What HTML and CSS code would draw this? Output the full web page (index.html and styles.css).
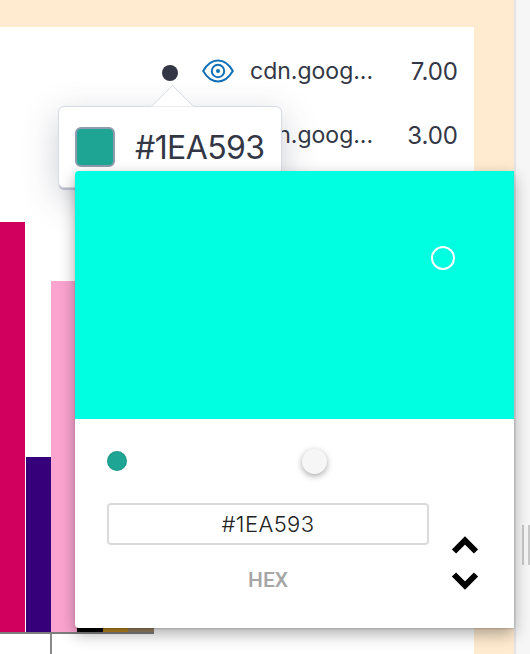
FILE: index.html
```html
<!DOCTYPE html>
<html lang="en">
<head>
<meta charset="utf-8">
<title>Color picker</title>
<link rel="stylesheet" href="styles.css">
</head>
<body>
<main class="page">
  <section class="card">
    <ul class="legend">
      <li class="legend-row">
        <span class="legend-dot"></span>
        <svg class="eye" viewBox="0 0 32 24" fill="none" stroke="#0f6fb8" stroke-width="2"><path d="M1.2 12C5 5.4 10 1.6 16 1.6S27 5.4 30.8 12C27 18.6 22 22.4 16 22.4S5 18.6 1.2 12Z"/><circle cx="16" cy="12" r="6.2"/><circle cx="16" cy="12" r="2" fill="#0f6fb8" stroke="none"/></svg>
        <span class="legend-name">cdn.goog...</span>
        <span class="legend-value">7.00</span>
      </li>
      <li class="legend-row">
        <span class="legend-dot legend-dot-hidden"></span>
        <span class="eye"></span>
        <span class="legend-name">cdn.goog...</span>
        <span class="legend-value">3.00</span>
      </li>
    </ul>
    <div class="chart">
      <div class="bars">
        <span class="bar bar-crimson"></span>
        <span class="bar bar-purple"></span>
        <span class="bar bar-pink"></span>
        <span class="bar bar-black"></span>
        <span class="bar bar-brown"></span>
        <span class="bar bar-taupe"></span>
      </div>
      <div class="axis"><span class="tick"></span></div>
    </div>
    <div class="tooltip">
      <span class="arrow"></span>
      <span class="swatch"></span>
      <span class="tooltip-text">#1EA593</span>
    </div>
  </section>
  <div class="picker">
    <div class="saturation"><span class="handle"></span></div>
    <div class="controls">
      <div class="slider-row">
        <span class="preview"></span>
        <span class="thumb"></span>
      </div>
      <div class="field-row">
        <div class="field">
          <div class="input">#1EA593</div>
          <div class="label">HEX</div>
        </div>
        <div class="toggles">
          <svg class="chev" viewBox="0 0 28 18" fill="none" stroke="#000" stroke-width="6"><path d="M3 15.500 14 4.500 25 15.500"/></svg>
          <svg class="chev" viewBox="0 0 28 18" fill="none" stroke="#000" stroke-width="6"><path d="M3 2.500 14 13.500 25 2.500"/></svg>
        </div>
      </div>
    </div>
  </div>
</main>
<aside class="side"><span class="grip"></span><span class="grip"></span></aside>
</body>
</html>
```
FILE: styles.css
```css
* { box-sizing: border-box; }
html, body { margin: 0; height: 100%; overflow: hidden; }
body {
  display: flex;
  width: 530px;
  height: 654px;
  font-family: Inter, "Liberation Sans", sans-serif;
  color: #333745;
}
.page {
  position: relative;
  width: 514px;
  padding: 27px 40px 0 0;
  background: #ffebcf;
}
.side {
  flex: 1;
  display: flex;
  gap: 4px;
  padding: 525px 0 0 6px;
  background: #f6f6f6;
  border-left: 2px solid #e4e4e4;
  align-items: flex-start;
}
.grip { width: 2px; height: 40px; background: #c8c8c8; }
.card {
  position: relative;
  height: 627px;
  background: #fff;
}
.legend {
  margin: 0;
  padding: 26px 16px 0 0;
  list-style: none;
}
.legend-row {
  display: flex;
  align-items: center;
  justify-content: flex-end;
  height: 36px;
  margin-bottom: 28px;
  font-size: 24px;
}
.legend-dot {
  width: 16px;
  height: 16px;
  margin-right: 24px;
  margin-top: 4px;
  border-radius: 50%;
  background: #333745;
}
.legend-dot-hidden { visibility: hidden; }
.eye { width: 32px; height: 24px; margin-right: 16px; }
.legend-name { width: 131px; font-size: 23px; }
.legend-value { width: 77px; text-align: right; }
.chart { position: absolute; left: 0; bottom: 0; width: 154px; padding-bottom: 20px; }
.bars { display: flex; align-items: flex-end; height: 410px; }
.bar { flex: 0 0 25.67px; }
.bar-crimson { height: 410px; background: #d1005f; border-right: 1px solid #fff; }
.bar-purple { height: 175px; background: #37007b; }
.bar-pink { height: 351px; background: #fba4d0; }
.bar-black { height: 8px; background: #000; }
.bar-brown { height: 8px; background: #c08a22; }
.bar-taupe { height: 8px; background: #9c8262; }
.axis { position: relative; height: 2px; background: #7d7d7d; }
.tick { position: absolute; left: 50px; top: 2px; width: 2px; height: 20px; background: #8a8a8a; }
.tooltip {
  position: absolute;
  left: 58px;
  top: 79px;
  display: flex;
  align-items: flex-start;
  gap: 20px;
  width: 224px;
  height: 82px;
  padding: 20px 16px;
  background: #fff;
  border: 1px solid #d7dbe5;
  border-radius: 6px;
  box-shadow: 0 3px 1px -1px #b9bdca, 0 10px 34px rgba(60, 64, 90, 0.25);
}
.arrow {
  position: absolute;
  left: 97.5px;
  top: -16.5px;
  width: 31px;
  height: 31px;
  background: #fff;
  border: solid #d7dbe5;
  border-width: 1px 0 0 1px;
  transform: rotate(45deg);
  clip-path: polygon(0 0, 100% 0, 0 100%);
}
.swatch {
  flex: none;
  width: 40px;
  height: 40px;
  background: #1ea593;
  border: 2px solid #8f9bae;
  border-radius: 6px;
}
.tooltip-text { font-size: 32px; line-height: 41px; letter-spacing: -0.6px; white-space: nowrap; }
.picker {
  position: absolute;
  left: 75px;
  top: 171px;
  width: 439px;
  height: 457px;
  background: #fff;
  border-radius: 4px 0 0 4px;
  box-shadow: 0 1px 2px rgba(0, 0, 0, 0.15), 0 6px 16px rgba(0, 0, 0, 0.32);
}
.saturation {
  position: relative;
  height: 248px;
  background: #00ffe0;
  border-radius: 4px 0 0 0;
}
.handle {
  position: absolute;
  left: 356px;
  top: 75px;
  width: 24px;
  height: 24px;
  border: 2px solid #fff;
  border-radius: 50%;
}
.controls { padding: 29px 32px 0; }
.slider-row { display: flex; align-items: center; height: 26px; }
.preview {
  width: 20px;
  height: 20px;
  border-radius: 50%;
  background: #1ea593;
  box-shadow: inset 0 0 0 1px rgba(0, 0, 0, 0.08);
}
.thumb {
  width: 25px;
  height: 25px;
  margin-left: 175px;
  border-radius: 50%;
  background: #f6f6f6;
  box-shadow: 0 2px 6px rgba(0, 0, 0, 0.35);
}
.field-row { display: flex; margin-top: 29px; }
.field { width: 322px; }
.input {
  height: 42px;
  border: 2px solid #dadada;
  border-radius: 4px;
  font-size: 22px;
  font-weight: 300;
  letter-spacing: 0.4px;
  line-height: 39px;
  text-align: center;
  color: #222;
}
.label {
  margin-top: 21px;
  font-family: Roboto, "Liberation Sans", sans-serif;
  font-size: 21px;
  font-weight: 500;
  line-height: 28px;
  text-align: center;
  color: #a6a6a6;
}
.toggles {
  display: flex;
  flex-direction: column;
  gap: 18px;
  margin: 33px 0 0 22px;
}
.chev { display: block; width: 28px; height: 18px; }
```
